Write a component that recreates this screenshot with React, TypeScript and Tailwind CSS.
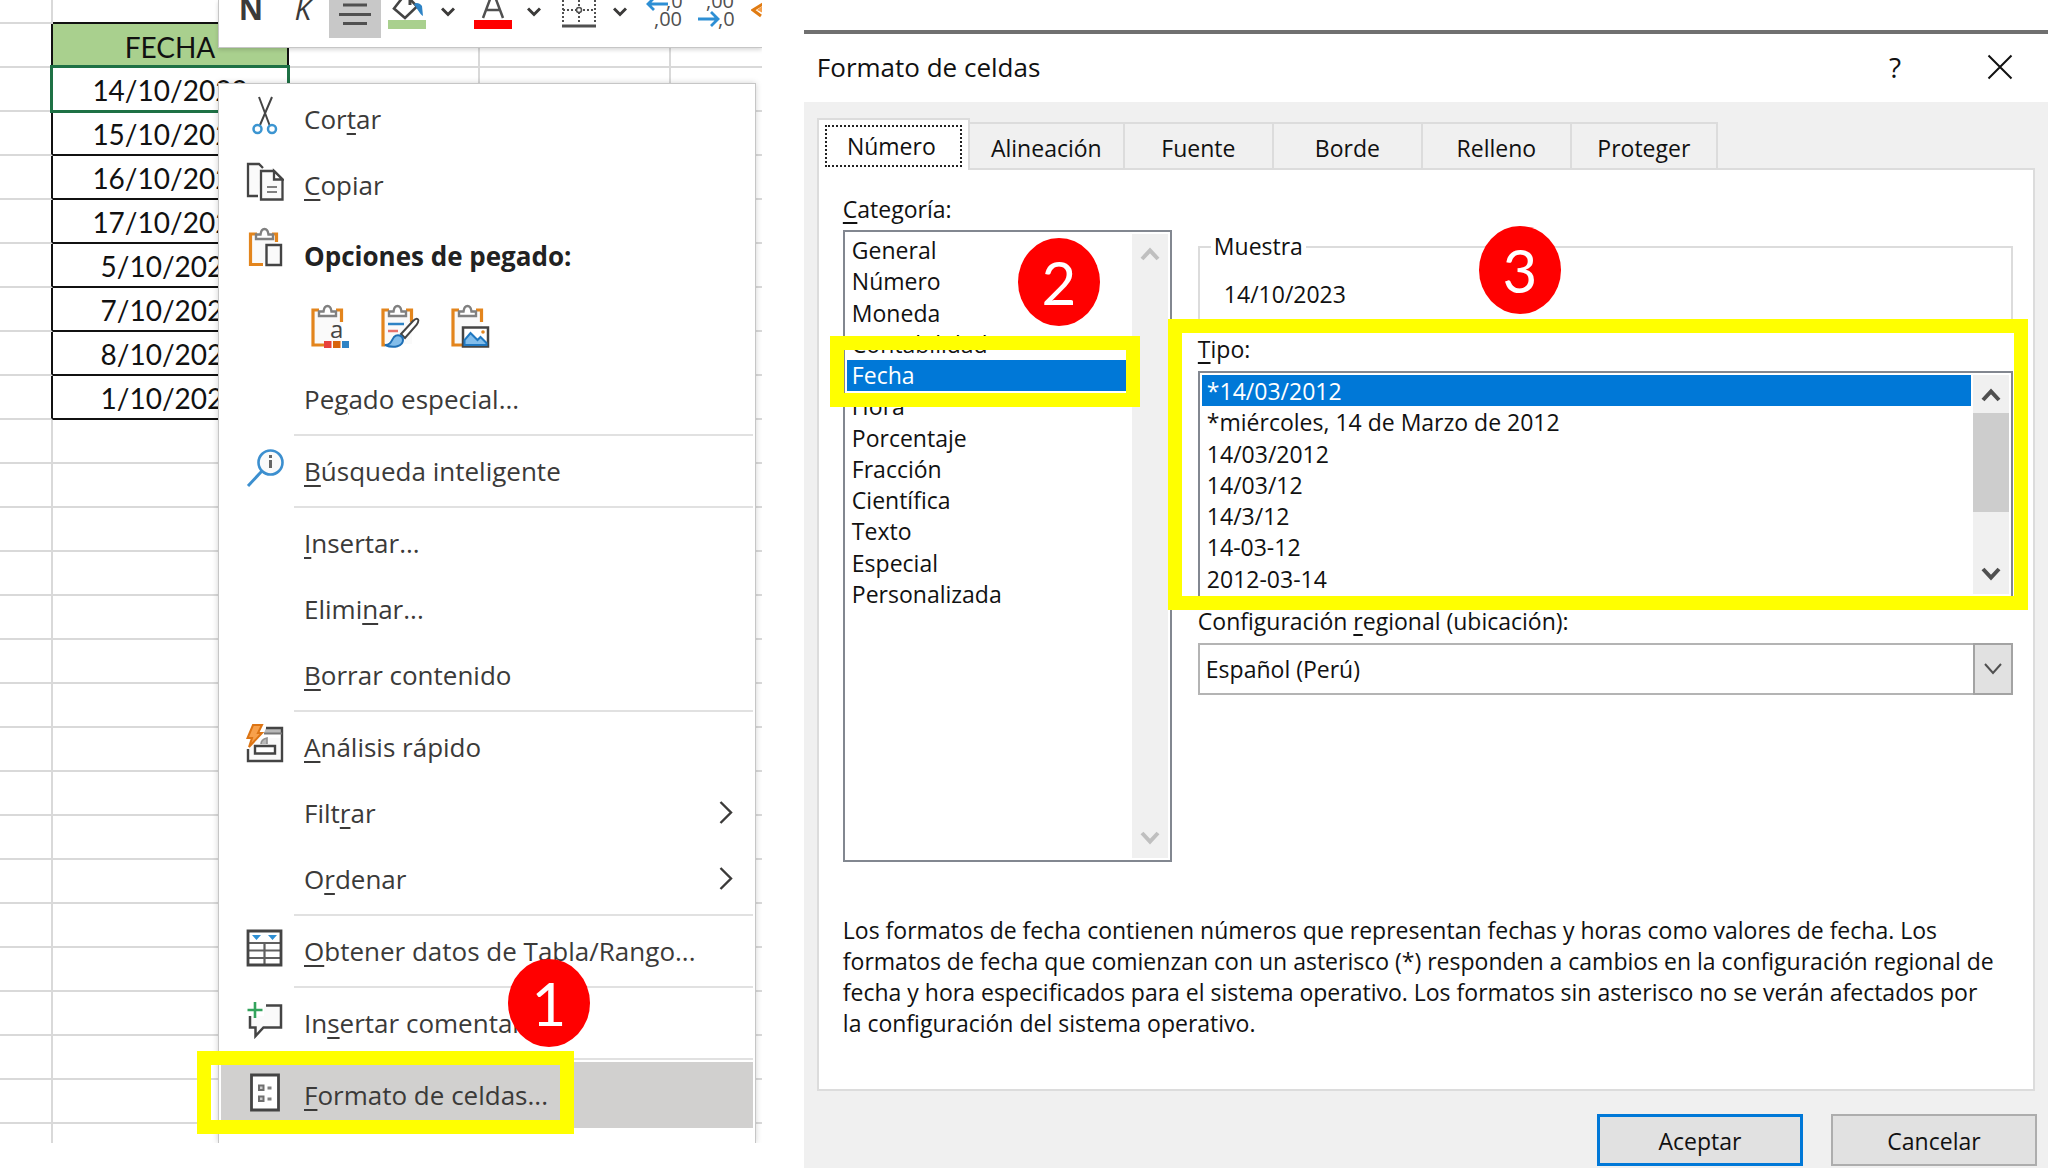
import type { ReactNode } from "react";

const SEGOE = "font-['Open_Sans','Noto_Sans',sans-serif]";
const CALIBRI = "font-['Lato','Open_Sans',sans-serif]";

/* ---------- shared pieces ---------- */

function Key({ children }: { children: ReactNode }) {
  return <span className="underline decoration-2 underline-offset-4">{children}</span>;
}

function Step({ n, className }: { n: number; className: string }) {
  return (
    <div
      className={`absolute z-20 flex h-[88px] w-[82px] items-center justify-center rounded-[50%] bg-[#ff0000] text-[60px] leading-none text-white ${CALIBRI} ${className}`}
    >
      {n}
    </div>
  );
}

function Highlight({ className }: { className: string }) {
  return <div className={`pointer-events-none absolute z-10 border-[14px] border-[#ffff00] ${className}`} />;
}

/* ---------- worksheet ---------- */

const dates = [
  "14/10/2023",
  "15/10/2023",
  "16/10/2023",
  "17/10/2023",
  "5/10/2023",
  "7/10/2023",
  "8/10/2023",
  "1/10/2023",
];

const GRID = "border-r-2 border-b-2 border-[#d9d9d9]";

function Sheet() {
  return (
    <table className={`w-full table-fixed border-separate border-spacing-0 text-[28px] leading-none text-[#111] ${CALIBRI}`}>
      <colgroup>
        <col className="w-[53px]" />
        <col className="w-[236px]" />
        <col className="w-[191px]" />
        <col className="w-[191px]" />
        <col />
      </colgroup>
      <tbody>
        <tr className="h-6">
          <td className={GRID} />
          <td className="border-r-2 border-b-2 border-r-[#d9d9d9] border-b-[#111]" />
          <td className={GRID} />
          <td className={GRID} />
          <td className="border-b-2 border-[#d9d9d9]" />
        </tr>
        <tr className="h-11">
          <td className="border-r-2 border-b-2 border-r-[#111] border-b-[#d9d9d9]" />
          <th className="border-r-2 border-b-2 border-[#111] bg-[#a9d08e] px-0 pt-[3px] pb-0 text-center font-normal">FECHA</th>
          <td className={GRID} />
          <td className={GRID} />
          <td className="border-b-2 border-[#d9d9d9]" />
        </tr>
        {dates.map((d, i) => (
          <tr key={d} className="h-11">
            <td className="border-r-2 border-b-2 border-r-[#111] border-b-[#d9d9d9]" />
            <td className="relative border-r-2 border-b-2 border-[#111] px-0 pt-[2px] pb-0 text-center">
              {d}
              {i === 0 && <div className="absolute -inset-[3px] border-[3px] border-[#1e7145]" />}
            </td>
            <td className={GRID} />
            <td className={GRID} />
            <td className="border-b-2 border-[#d9d9d9]" />
          </tr>
        ))}
        {Array.from({ length: 16 }, (_, i) => (
          <tr key={i} className="h-11">
            <td className={GRID} />
            <td className={GRID} />
            <td className={GRID} />
            <td className={GRID} />
            <td className="border-b-2 border-[#d9d9d9]" />
          </tr>
        ))}
        <tr className="h-[19px]">
          <td className="border-r-2 border-[#d9d9d9]" />
          <td className="border-r-2 border-[#d9d9d9]" />
          <td className="border-r-2 border-[#d9d9d9]" />
          <td className="border-r-2 border-[#d9d9d9]" />
          <td />
        </tr>
      </tbody>
    </table>
  );
}

/* ---------- mini toolbar ---------- */

function ToolChevron({ label }: { label: string }) {
  return (
    <button aria-label={label} className="flex h-[38px] w-[34px] shrink-0 justify-center pt-[7px] pr-1">
      <svg width="14" height="10" viewBox="0 0 14 10" fill="none" stroke="#3b3a39" strokeWidth="3">
        <path d="M1 1.500 7 7.500 13 1.500" />
      </svg>
    </button>
  );
}

function MiniToolbar() {
  return (
    <div className={`absolute top-0 right-0 left-[218px] flex h-[48px] overflow-hidden border-b border-l border-[#c6c6c6] bg-white pl-[6px] text-[#3b3a39] shadow-[0_2px_4px_rgba(0,0,0,0.15)] ${SEGOE}`}>
      <button className="flex h-[38px] w-[52px] shrink-0 items-start justify-center">
        <span className="-mt-3 text-[30px] leading-[42px] font-bold">N</span>
      </button>
      <button className="flex h-[38px] w-[52px] shrink-0 items-start justify-center">
        <span className="-mt-3 text-[30px] leading-[42px] italic">K</span>
      </button>
      <button aria-label="Centrar" className="flex h-[38px] w-[52px] shrink-0 items-start justify-center bg-[#c8c8c8]">
        <svg width="34" height="28" viewBox="0 0 34 28" stroke="#505050" strokeWidth="3">
          <path d="M5 5h24M1 14.500h32M5 23.500h24" />
        </svg>
      </button>
      <button aria-label="Color de relleno" className="flex h-[38px] w-[52px] shrink-0 justify-center">
        <svg width="38" height="30" viewBox="0 0 38 30" fill="none">
          <path d="M15 -3 6 8.500 17 18 29 6.500 20 -3" fill="#fff" stroke="#444" strokeWidth="2.600" />
          <path d="M22 -2v7" stroke="#444" strokeWidth="3" />
          <path d="M26 4c2-2 6-1 8 2l1 10c-3-2-5-6-9-12z" fill="#2e83c5" />
          <rect x="0" y="20" width="38" height="9" fill="#a9d08e" />
        </svg>
      </button>
      <ToolChevron label="Más colores de relleno" />
      <button aria-label="Color de fuente" className="flex h-[38px] w-[52px] shrink-0 justify-center">
        <svg width="38" height="30" viewBox="0 0 38 30" fill="none">
          <path d="M9 18 18 -6h2l9 24M12.500 10h13" stroke="#505050" strokeWidth="2.500" />
          <rect x="0" y="20" width="38" height="9" fill="#ff0000" />
        </svg>
      </button>
      <ToolChevron label="Más colores de fuente" />
      <button aria-label="Bordes" className="flex h-[38px] w-[52px] shrink-0 justify-center">
        <svg width="36" height="30" viewBox="0 0 36 30" fill="none" stroke="#505050">
          <path d="M2 0v24M18 0v24M34 0v24M2 10h32" strokeWidth="2" strokeDasharray="2 2" />
          <circle cx="18" cy="10" r="2.500" fill="#fff" strokeWidth="1.500" />
          <path d="M1 26h34" strokeWidth="3" />
        </svg>
      </button>
      <ToolChevron label="Más bordes" />
      <button aria-label="Aumentar decimales" className="flex h-[38px] w-[52px] shrink-0 justify-center">
        <svg width="38" height="32" viewBox="0 0 38 32" fill="none">
          <path d="M22 4H2M8 -2 2 4l6 6" stroke="#2e8fd4" strokeWidth="2.800" />
          <text x="20" y="8" fontSize="20" fill="#505050">,0</text>
          <text x="8" y="26" fontSize="20" fill="#505050">,00</text>
        </svg>
      </button>
      <button aria-label="Disminuir decimales" className="flex h-[38px] w-[52px] shrink-0 justify-center">
        <svg width="38" height="32" viewBox="0 0 38 32" fill="none">
          <path d="M0 19h19M13 12l7 7-7 7" stroke="#2e8fd4" strokeWidth="2.800" />
          <text x="8" y="8" fontSize="20" fill="#505050">,00</text>
          <text x="20" y="26" fontSize="20" fill="#505050">,0</text>
        </svg>
      </button>
      <button aria-label="Borrar formato" className="flex h-[38px] w-[52px] shrink-0 pl-2">
        <svg width="24" height="20" viewBox="0 0 24 20" fill="#f7a04b" stroke="#e07b12" strokeWidth="3">
          <path d="M12 4 2 10l8 6" fill="none" />
          <path d="M6 10 14 4v10z" stroke="none" />
        </svg>
      </button>
    </div>
  );
}

/* ---------- context menu icons ---------- */

const DARK = "#444444";
const ORANGE = "#e3851d";

function Clip() {
  return <path d="M9 12V7.500h4.500C14 3.500 15.500 2 17.500 2s3.500 1.500 4 5.500H26V12z" fill="#fff" stroke="#808080" strokeWidth="2.400" />;
}

const cutIcon = (
  <svg width="36" height="40" viewBox="0 0 36 40" fill="none">
    <path d="M12 1 22.500 29M25 1 13 29" stroke={DARK} strokeWidth="2" />
    <circle cx="10.500" cy="33" r="4" stroke="#3c95d1" strokeWidth="2.500" />
    <circle cx="25" cy="33" r="4" stroke="#3c95d1" strokeWidth="2.500" />
  </svg>
);

const copyIcon = (
  <svg width="38" height="40" viewBox="0 0 38 40" fill="#fafafa" stroke={DARK} strokeWidth="2.300">
    <path d="M12 34H2V2H13l4 4" />
    <path d="M15 9h13l8.500 8.500V37.500H15z" />
    <path d="M28 9v8.500h8.500z" fill="#fff" />
    <path d="M21 25h10M21 30h10" stroke="#808080" strokeWidth="2" />
  </svg>
);

const pasteIcon = (
  <svg width="36" height="40" viewBox="0 0 36 40" fill="none">
    <path d="M4 7h25v30H4z" fill="#fafafa" />
    <path d="M10 7H3.500v30.500H16M25 7h4.500v8" stroke={ORANGE} strokeWidth="3.200" />
    <Clip />
    <path d="M19.500 18h14.500v20H19.500z" fill="#fafafa" stroke={DARK} strokeWidth="2.400" />
  </svg>
);

function Board({ children }: { children: ReactNode }) {
  return (
    <svg width="40" height="44" viewBox="0 0 40 44" fill="none">
      <path d="M3 6h29v34H3z" fill="#fafafa" />
      <path d="M9 6H3v35h11M26 6h5.500v12" stroke={ORANGE} strokeWidth="3.200" />
      <Clip />
      {children}
    </svg>
  );
}

const pasteDestination = (
  <Board>
    <text x="20" y="34" fontSize="24" fill={DARK}>a</text>
    <path d="M14 37h7.500v7H14z" fill="#e8413c" />
    <path d="M23 37h7.500v7H23z" fill="#d8640c" />
    <path d="M32 37h7v7h-7z" fill="#2e83c5" />
  </Board>
);

const pasteFormat = (
  <Board>
    <path d="M5 38h12v6H5z" fill="#fff" />
    <path d="M8 20h16" stroke="#2e83c5" strokeWidth="2.500" />
    <path d="M8 27h10" stroke="#e8716c" strokeWidth="2.500" />
    <path d="M37.500 15c1.500 1 1 3-1 6L25 34l-4-4 12-13c2-2 3-3 4.500-2z" fill="#fff" stroke={DARK} strokeWidth="2" />
    <path d="M5 41c6 0 6-4 9-8 3-3 9-2 9 3 0 6-9 9-18 5z" fill="#83bdea" stroke="#1f6fb5" strokeWidth="2" />
  </Board>
);

const pastePicture = (
  <Board>
    <path d="M13 23.500h25v19H13z" fill="#fff" stroke={DARK} strokeWidth="2.500" />
    <path d="M14.500 41v-5l6-7 7 7 3-3 6 6v2z" fill="#83bdea" stroke="#1f78c1" strokeWidth="2" />
    <circle cx="33" cy="28" r="1.800" fill={ORANGE} />
  </Board>
);

const searchIcon = (
  <svg width="38" height="40" viewBox="0 0 38 40" fill="none">
    <circle cx="24.500" cy="14.500" r="12" fill="#fafafa" stroke="#3c8fcf" strokeWidth="2.600" />
    <path d="M15.500 23.500 2 38" stroke="#3c8fcf" strokeWidth="3" />
    <path d="M23 7h3v3h-3zM23 12h3v8h-3z" fill="#666" />
  </svg>
);

const quickIcon = (
  <svg width="38" height="40" viewBox="0 0 38 40" fill="none">
    <path d="M3 14h33v23H3z" fill="#fafafa" />
    <path d="M20 4h16v5H18z" fill="#b9b9b9" />
    <path d="M20 4h16v33H2V25" stroke={DARK} strokeWidth="2.400" />
    <path d="M18 9.500h18" stroke="#777" strokeWidth="2" />
    <path d="M15 20c0-3 2-5 6-6v6" fill="#b9b9b9" stroke="#909090" strokeWidth="1.600" />
    <path d="M9 29.500V22h20v7.500z" fill="#fff" stroke={DARK} strokeWidth="2.400" />
    <path d="M7 1h9l-4 8h4L3 23l3-9H1.500z" fill="#f7a04b" stroke="#dc7414" strokeWidth="2" />
  </svg>
);

const tableIcon = (
  <svg width="38" height="40" viewBox="0 0 38 40" fill="none">
    <path d="M2 3h33v34H2z" fill="#fff" />
    <path d="M2 15h33M2 22.500h33M2 30h33M18.500 15v22" stroke="#606060" strokeWidth="2.200" />
    <path d="M2 3h33v34H2z" stroke={DARK} strokeWidth="2.800" />
    <path d="M6 7h9l-4.500 5zM22 7h9l-4.500 5z" fill="#2e8fd4" />
  </svg>
);

const commentIcon = (
  <svg width="38" height="40" viewBox="0 0 38 40" fill="none">
    <path d="M4 16V27.500h5.500V36l8-8.500H35V5.500H20" fill="#fafafa" stroke={DARK} strokeWidth="2.500" />
    <path d="M0 1h18v15H0z" fill="#fff" />
    <path d="M9 2v16M1.500 10h15" stroke="#33a35c" strokeWidth="2.600" />
  </svg>
);

const formatIcon = (
  <svg width="38" height="40" viewBox="0 0 38 40" fill="none">
    <path d="M5.500 3h27v35h-27z" fill="#fff" stroke={DARK} strokeWidth="2.800" />
    <path d="M13 13.500h4.500v4.500H13zM13 24.500h4.500v4.500H13z" fill="#ccc" stroke="#707070" strokeWidth="2" />
    <path d="M21.500 16h4M21.500 27h4" stroke="#808080" strokeWidth="3" />
  </svg>
);

/* ---------- context menu ---------- */

function Item({
  icon,
  children,
  submenu,
  active,
}: {
  icon?: ReactNode;
  children: ReactNode;
  submenu?: boolean;
  active?: boolean;
}) {
  return (
    <button
      role="menuitem"
      className={`relative flex h-[66px] w-full items-center text-left whitespace-nowrap ${active ? "bg-[#d1d0cf]" : ""}`}
    >
      <span className="flex w-[83px] shrink-0 justify-center pb-[6px] pl-[4px]">{icon}</span>
      <span className="flex-1">{children}</span>
      {submenu && (
        <svg className="mr-5" width="14" height="26" viewBox="0 0 14 26" fill="none" stroke="#3b3a39" strokeWidth="2.400">
          <path d="M1.500 2 12 12.500 1.500 23" />
        </svg>
      )}
    </button>
  );
}

function Separator() {
  return (
    <div role="separator" className="flex h-[6px] items-center pl-[73px]">
      <div className="h-[2px] flex-1 bg-[#e1e1e1]" />
    </div>
  );
}

function ContextMenu() {
  return (
    <div
      role="menu"
      className={`absolute top-[83px] right-[6px] bottom-0 left-[218px] border border-b-0 border-[#c6c6c6] bg-white p-[2px] text-[26px] leading-[34px] text-[#3b3a39] shadow-[0_0_6px_rgba(0,0,0,0.18)] ${SEGOE}`}
    >
      <Item icon={cutIcon}>
        Cor<Key>t</Key>ar
      </Item>
      <Item icon={copyIcon}>
        <Key>C</Key>opiar
      </Item>
      <div className="flex h-[72px] items-start">
        <span className="flex w-[83px] shrink-0 justify-center pt-[9px] pl-[4px]">{pasteIcon}</span>
        <span className="pt-[21px] font-bold text-[#222]">Opciones de pegado:</span>
      </div>
      <div className="flex h-[76px] items-center gap-[30px] pb-1 pl-[89px]">
        <button aria-label="Usar tema de destino">{pasteDestination}</button>
        <button aria-label="Formato">{pasteFormat}</button>
        <button aria-label="Imagen">{pastePicture}</button>
      </div>
      <Item>
        Pe<Key>g</Key>ado especial...
      </Item>
      <Separator />
      <Item icon={searchIcon}>
        <Key>B</Key>úsqueda inteligente
      </Item>
      <Separator />
      <Item>
        <Key>I</Key>nsertar...
      </Item>
      <Item>
        Elimi<Key>n</Key>ar...
      </Item>
      <Item>
        <Key>B</Key>orrar contenido
      </Item>
      <Separator />
      <Item icon={quickIcon}>
        <Key>A</Key>nálisis rápido
      </Item>
      <Item submenu>
        Filt<Key>r</Key>ar
      </Item>
      <Item submenu>
        O<Key>r</Key>denar
      </Item>
      <Separator />
      <Item icon={tableIcon}>
        <Key>O</Key>btener datos de Tabla/Rango...
      </Item>
      <Separator />
      <Item icon={commentIcon}>
        In<Key>s</Key>ertar comentario
      </Item>
      <Separator />
      <div className="relative">
        <Item icon={formatIcon} active>
          <Key>F</Key>ormato de celdas...
        </Item>
        <Highlight className="-top-[11px] -left-[24px] h-[83px] w-[377px]" />
        <Step n={1} className="-top-[103px] left-[287px]" />
      </div>
    </div>
  );
}

/* ---------- dialog ---------- */

function ScrollArrow({ up, color }: { up?: boolean; color: string }) {
  return (
    <svg width="20" height="16" viewBox="0 0 20 16" fill="none" stroke={color} strokeWidth="4">
      <path d={up ? "M2 13 10 4.500 18 13" : "M2 3 10 11.500 18 3"} />
    </svg>
  );
}

const tabs = [
  ["Alineación", "w-[155px]"],
  ["Fuente", "w-[149px]"],
  ["Borde", "w-[149px]"],
  ["Relleno", "w-[149px]"],
  ["Proteger", "w-[146px]"],
];

const categories = [
  "General",
  "Número",
  "Moneda",
  "Contabilidad",
  "Fecha",
  "Hora",
  "Porcentaje",
  "Fracción",
  "Científica",
  "Texto",
  "Especial",
  "Personalizada",
];

const types = [
  "*14/03/2012",
  "*miércoles, 14 de Marzo de 2012",
  "14/03/2012",
  "14/03/12",
  "14/3/12",
  "14-03-12",
  "2012-03-14",
];

function CategoryList() {
  return (
    <div className="relative w-[329px] shrink-0">
      <div id="categoria" className="h-[31px]">
        <Key>C</Key>ategoría:
      </div>
      <div className="mt-[5px] flex h-[632px] border-2 border-[#828790] p-[2px]">
        <ul role="listbox" aria-labelledby="categoria" className="flex h-[376px] flex-1 flex-col pt-[1px] pr-[4px]">
          {categories.map((c) => (
            <li
              key={c}
              role="option"
              aria-selected={c === "Fecha"}
              className={`flex-1 pl-[5px] ${c === "Fecha" ? "bg-[#0078d7] text-white" : ""}`}
            >
              {c}
            </li>
          ))}
        </ul>
        <div className="flex w-[36px] flex-col items-center justify-between bg-[#f0f0f0] py-[12px]">
          <ScrollArrow up color="#bfbfbf" />
          <ScrollArrow color="#bfbfbf" />
        </div>
      </div>
      <Highlight className="top-[142px] -left-[13px] h-[71px] w-[310px]" />
      <Step n={2} className="top-[44px] left-[175px]" />
    </div>
  );
}

function TypePanel() {
  return (
    <div className="relative min-w-0 flex-1 pt-[37px]">
      <fieldset className="h-[100px] border-2 border-[#dcdcdc] px-[24px]">
        <legend className="-ml-[13px] h-[31px] px-[3px]">Muestra</legend>
        <div className="pt-[17px]">14/10/2023</div>
      </fieldset>
      <div id="tipo" className="mt-[3px] mb-[6px] h-[31px]">
        <Key>T</Key>ipo:
      </div>
      <div className="flex h-[227px] border-2 border-[#828790] p-[2px]">
        <ul role="listbox" aria-labelledby="tipo" className="flex flex-1 flex-col pr-[2px]">
          {types.map((t, i) => (
            <li
              key={t}
              role="option"
              aria-selected={i === 0}
              className={`flex-1 pt-[1px] pl-[5px] leading-[30px] ${i === 0 ? "bg-[#0078d7] text-white" : ""}`}
            >
              {t}
            </li>
          ))}
        </ul>
        <div className="flex w-[36px] flex-col items-center bg-[#f0f0f0] py-[12px]">
          <ScrollArrow up color="#505050" />
          <div className="mt-[10px] mb-auto h-[99px] w-full bg-[#cdcdcd]" />
          <ScrollArrow color="#505050" />
        </div>
      </div>
      <label htmlFor="region" className="mt-[8px] block h-[31px]">
        Configuración <Key>r</Key>egional (ubicación):
      </label>
      <div className="relative mt-[6px]">
        <select id="region" className="h-[52px] w-full appearance-none border-2 border-[#b4b4b4] bg-white pl-[6px]">
          <option>Español (Perú)</option>
        </select>
        <div className="pointer-events-none absolute top-0 right-0 flex h-full w-[40px] items-center justify-center border-2 border-[#a3a3a3] bg-[#e1e1e1]">
          <svg width="20" height="14" viewBox="0 0 20 14" fill="none" stroke="#505050" strokeWidth="2">
            <path d="M2 2 10 11 18 2" />
          </svg>
        </div>
      </div>
      <Highlight className="top-[125px] -right-[15px] -left-[30px] h-[291px]" />
      <Step n={3} className="top-[32px] left-[281px]" />
    </div>
  );
}

function Dialog() {
  return (
    <section
      role="dialog"
      aria-label="Formato de celdas"
      className={`mt-[30px] ml-[42px] flex min-w-0 flex-1 flex-col border-t-[4px] border-[#707070] bg-[#f0f0f0] text-[23px] leading-[31px] text-[#111] ${SEGOE}`}
    >
      <header className="flex h-[68px] items-center bg-white pb-[2px] pl-[13px]">
        <h1 className="flex-1 text-[26px]">Formato de celdas</h1>
        <button aria-label="Ayuda" className="w-[24px] text-[28px]">?</button>
        <button aria-label="Cerrar" className="mr-[35px] ml-[80px]">
          <svg width="26" height="26" viewBox="0 0 26 26" fill="none" stroke="#111" strokeWidth="2">
            <path d="M1.500 1.500 24.500 24.500M24.500 1.500 1.500 24.500" />
          </svg>
        </button>
      </header>

      <div className="flex flex-1 flex-col px-[13px] pt-4">
        <div role="tablist" className="relative z-[1] -mb-[2px] flex items-end">
          <button role="tab" aria-selected className="h-[52px] w-[153px] border-2 border-b-0 border-[#dcdcdc] bg-white px-[6px] pt-[5px] pb-[3px]">
            <span className="flex h-full items-center justify-center border-2 border-dotted border-[#222] pr-[4px]">Número</span>
          </button>
          {tabs.map(([label, width]) => (
            <button key={label} role="tab" className={`h-[48px] border-2 border-l-0 border-[#dcdcdc] pt-[4px] ${width}`}>
              {label}
            </button>
          ))}
        </div>

        <div role="tabpanel" className="border-2 border-[#dcdcdc] bg-white pt-[24px] pr-[20px] pb-[50px] pl-[24px]">
          <div className="flex gap-[26px]">
            <CategoryList />
            <TypePanel />
          </div>
          <p className="mt-[53px] pr-[14px]">
            Los formatos de fecha contienen números que representan fechas y horas como valores de fecha. Los formatos de
            fecha que comienzan con un asterisco (*) responden a cambios en la configuración regional de fecha y hora
            especificados para el sistema operativo. Los formatos sin asterisco no se verán afectados por la
            configuración del sistema operativo.
          </p>
        </div>

        <footer className="-mr-[2px] flex justify-end gap-7 pt-[23px] pb-[3px]">
          <button className="h-[52px] w-[206px] border-[3px] border-[#0078d7] bg-[#e1e1e1] pt-[3px]">Aceptar</button>
          <button className="h-[52px] w-[206px] border-2 border-[#adadad] bg-[#e1e1e1] pt-[3px]">Cancelar</button>
        </footer>
      </div>
    </section>
  );
}

export default function App() {
  return (
    <main className="flex min-h-screen items-start bg-white">
      <section className="relative w-[37.2%] shrink-0 overflow-hidden">
        <Sheet />
        <MiniToolbar />
        <ContextMenu />
      </section>
      <Dialog />
    </main>
  );
}
